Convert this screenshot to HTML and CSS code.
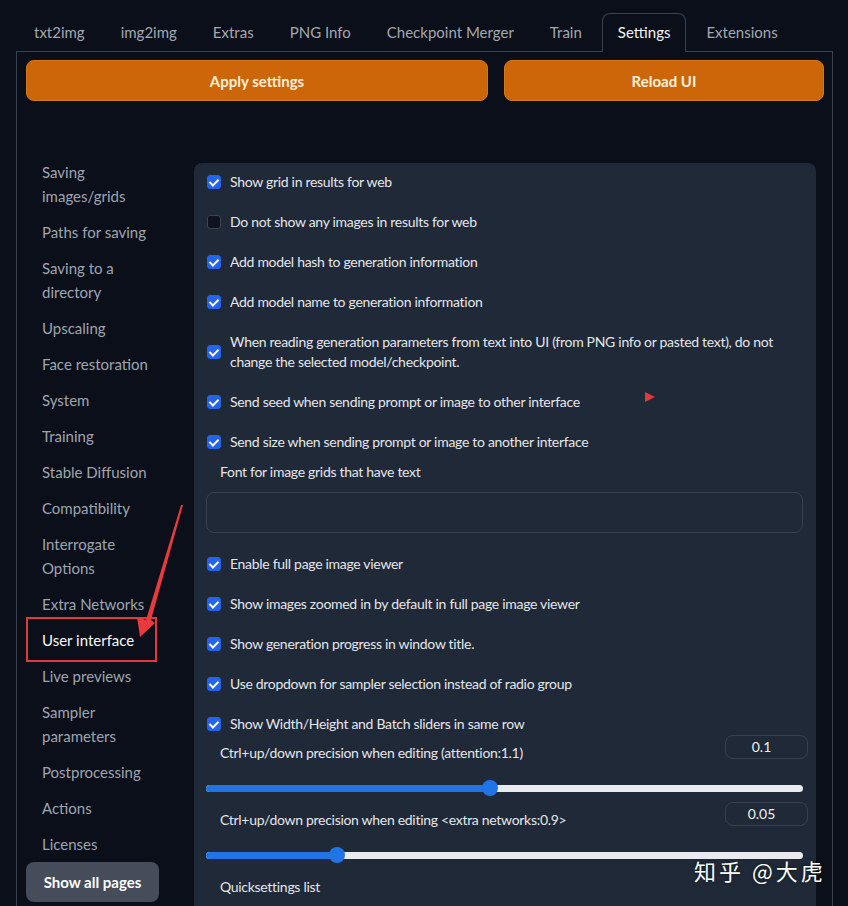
FILE: index.html
```html
<!DOCTYPE html>
<html lang="en">
<head>
<meta charset="utf-8">
<title>Settings</title>
<link rel="stylesheet" href="styles.css">
</head>
<body>
<div class="app">
  <nav class="tabs">
    <span class="tab">txt2img</span>
    <span class="tab">img2img</span>
    <span class="tab">Extras</span>
    <span class="tab">PNG Info</span>
    <span class="tab">Checkpoint Merger</span>
    <span class="tab">Train</span>
    <span class="tab active">Settings</span>
    <span class="tab">Extensions</span>
  </nav>
  <section class="panel">
    <div class="actions">
      <button class="btn-primary">Apply settings</button>
      <button class="btn-primary">Reload UI</button>
    </div>
    <div class="settings">
      <aside class="sidebar">
        <div class="side-item">Saving<br>images/grids</div>
        <div class="side-item">Paths for saving</div>
        <div class="side-item">Saving to a<br>directory</div>
        <div class="side-item">Upscaling</div>
        <div class="side-item">Face restoration</div>
        <div class="side-item">System</div>
        <div class="side-item">Training</div>
        <div class="side-item">Stable Diffusion</div>
        <div class="side-item">Compatibility</div>
        <div class="side-item">Interrogate<br>Options</div>
        <div class="side-item">Extra Networks</div>
        <div class="side-item selected">User interface</div>
        <div class="side-item">Live previews</div>
        <div class="side-item">Sampler<br>parameters</div>
        <div class="side-item">Postprocessing</div>
        <div class="side-item">Actions</div>
        <div class="side-item">Licenses</div>
        <button class="btn-secondary">Show all pages</button>
      </aside>
      <main class="content">
        <label class="check"><span class="box on"></span><span>Show grid in results for web</span></label>
        <label class="check"><span class="box"></span><span>Do not show any images in results for web</span></label>
        <label class="check"><span class="box on"></span><span>Add model hash to generation information</span></label>
        <label class="check"><span class="box on"></span><span>Add model name to generation information</span></label>
        <label class="check"><span class="box on"></span><span>When reading generation parameters from text into UI (from PNG info or pasted text), do not change the selected model/checkpoint.</span></label>
        <label class="check"><span class="box on"></span><span>Send seed when sending prompt or image to other interface</span></label>
        <label class="check"><span class="box on"></span><span>Send size when sending prompt or image to another interface</span></label>
        <div class="field">
          <div class="field-label">Font for image grids that have text</div>
          <div class="textbox"></div>
        </div>
        <label class="check"><span class="box on"></span><span>Enable full page image viewer</span></label>
        <label class="check"><span class="box on"></span><span>Show images zoomed in by default in full page image viewer</span></label>
        <label class="check"><span class="box on"></span><span>Show generation progress in window title.</span></label>
        <label class="check"><span class="box on"></span><span>Use dropdown for sampler selection instead of radio group</span></label>
        <label class="check"><span class="box on"></span><span>Show Width/Height and Batch sliders in same row</span></label>
        <div class="slider-block first">
          <div class="slider-head">
            <span class="field-label">Ctrl+up/down precision when editing (attention:1.1)</span>
            <span class="num">0.1</span>
          </div>
          <div class="track"><div class="fill" style="width:47.6%"></div></div>
        </div>
        <div class="slider-block">
          <div class="slider-head">
            <span class="field-label">Ctrl+up/down precision when editing &lt;extra networks:0.9&gt;</span>
            <span class="num">0.05</span>
          </div>
          <div class="track"><div class="fill" style="width:21.9%"></div></div>
        </div>
        <div class="field-label quick">Quicksettings list</div>
      </main>
    </div>
  </section>
</div>
<div class="annot-box"></div>
<svg class="annot-arrow" width="80" height="160" viewBox="0 0 80 160">
  <polygon points="61,15 63,15 31,130 35,133 20,147 17,127 26,130" fill="#e83a3c"/>
</svg>
<svg class="annot-tri" width="12" height="12" viewBox="0 0 12 12"><polygon points="1,1 11,6 1,11" fill="#e8373a"/></svg>
<div class="watermark">知乎 @大虎</div>
</body>
</html>
```
FILE: styles.css
```css
* { box-sizing: border-box; }
html, body { margin: 0; padding: 0; }
body {
  background: #0b0f19;
  font-family: "Lato", "Noto Sans", sans-serif;
  color: #e5e7eb;
  width: 848px;
  height: 906px;
  overflow: hidden;
  position: relative;
}
.app { padding: 0 15px 0 16px; }
.tabs {
  display: flex;
  align-items: flex-end;
  height: 51px;
  padding-left: 2px;
  position: relative;
  z-index: 2;
}
.tab {
  font-size: 15px;
  color: #a3a8b2;
  padding: 0 15px;
  height: 39px;
  line-height: 39px;
  margin-right: 4px;
  border: 1px solid transparent;
  border-bottom: none;
}
.tab.active {
  color: #f3f4f6;
  border-color: #374151;
  border-radius: 8px 8px 0 0;
  background: #0b0f19;
  height: 39px;
  line-height: 37px;
  margin-bottom: -1px;
}
.panel {
  border: 1px solid #374151;
  border-bottom: none;
  padding: 8px 8px 0 9px;
  height: 860px;
}
.actions {
  display: grid;
  grid-template-columns: 462px 320px;
  gap: 16px;
}
.btn-primary {
  height: 41px;
  border-radius: 8px;
  border: 1px solid #d8781c;
  background: #cd6608;
  color: #fdf0dc;
  font-family: inherit;
  font-weight: 700;
  font-size: 15px;
}
.settings {
  display: flex;
  margin-top: 61px;
  gap: 9px;
}
.sidebar {
  width: 159px;
  flex: none;
  margin-top: -8px;
}
.side-item {
  font-size: 15px;
  line-height: 24px;
  padding: 6px 16px;
  color: #9ea5b1;
}
.side-item.selected { color: #f9fafb; }
.btn-secondary {
  height: 40px;
  width: 133px;
  border-radius: 8px;
  border: none;
  background: #454d5b;
  color: #ffffff;
  font-family: inherit;
  font-weight: 700;
  font-size: 15px;
}
.content {
  width: 622px;
  background: #1f2937;
  border-radius: 8px;
  padding: 0 13px;
  height: 760px;
  margin-top: 1px;
}
.check {
  display: flex;
  align-items: center;
  gap: 9px;
  padding: 10px 0;
  font-size: 14px;
  line-height: 20px;
  letter-spacing: -0.3px;
  color: #e4e6ea;
}
.content > .check:first-child { padding-top: 9px; }
.box {
  flex: none;
  width: 14px;
  height: 14px;
  border-radius: 3px;
  background: #0f1420;
  border: 1px solid #3b4454;
  position: relative;
}
.box.on {
  background: #2563eb;
  border-color: #2563eb;
}
.box.on::after {
  content: "";
  position: absolute;
  left: 3px;
  top: 1px;
  width: 4px;
  height: 7px;
  border: solid #fff;
  border-width: 0 2px 2px 0;
  transform: rotate(45deg);
}
.field { margin-left: -1px; }
.field-label {
  font-size: 14px;
  line-height: 20px;
  letter-spacing: -0.3px;
  color: #e4e6ea;
  padding-left: 14px;
}
.textbox {
  margin-top: 10px;
  height: 41px;
  border: 1px solid #374151;
  border-radius: 8px;
  background: #1f2937;
  margin-bottom: 11px;
}
.slider-block {
  padding-top: 3px;
  margin-left: -1px;
  margin-right: -5px;
}
.slider-block.first { margin-top: -10px; }
.slider-head {
  display: flex;
  justify-content: space-between;
  align-items: flex-end;
  height: 26px;
}
.num {
  width: 83px;
  height: 24px;
  margin-top: -2px;
  border: 1px solid #374151;
  border-radius: 8px;
  font-size: 14px;
  line-height: 22px;
  text-align: center;
  padding-right: 10px;
  align-self: flex-start;
  color: #eef0f3;
}
.track {
  margin-top: 22px;
  margin-bottom: 9px;
  margin-right: 5px;
  height: 7px;
  border-radius: 4px;
  background: #e8eaee;
  position: relative;
}
.fill {
  height: 100%;
  background: #2174e6;
  border-radius: 4px;
  position: relative;
}
.fill::after {
  content: "";
  position: absolute;
  right: -8px;
  top: -5px;
  width: 16px;
  height: 16px;
  border-radius: 50%;
  background: #2174e6;
}
.quick { padding-top: 9px; margin-left: -1px; }
.annot-box {
  position: absolute;
  left: 26px;
  top: 617px;
  width: 131px;
  height: 45px;
  border: 2px solid #e0383b;
}
.annot-arrow {
  position: absolute;
  left: 120px;
  top: 490px;
}
.annot-tri {
  position: absolute;
  left: 644px;
  top: 391px;
}
.watermark {
  position: absolute;
  left: 694px;
  top: 855px;
  font-family: "Noto Sans CJK SC", sans-serif;
  font-size: 22px;
  line-height: 30px;
  letter-spacing: 3px;
  color: #ffffff;
  text-shadow: 0 0 3px rgba(0,0,0,0.6);
}
```
